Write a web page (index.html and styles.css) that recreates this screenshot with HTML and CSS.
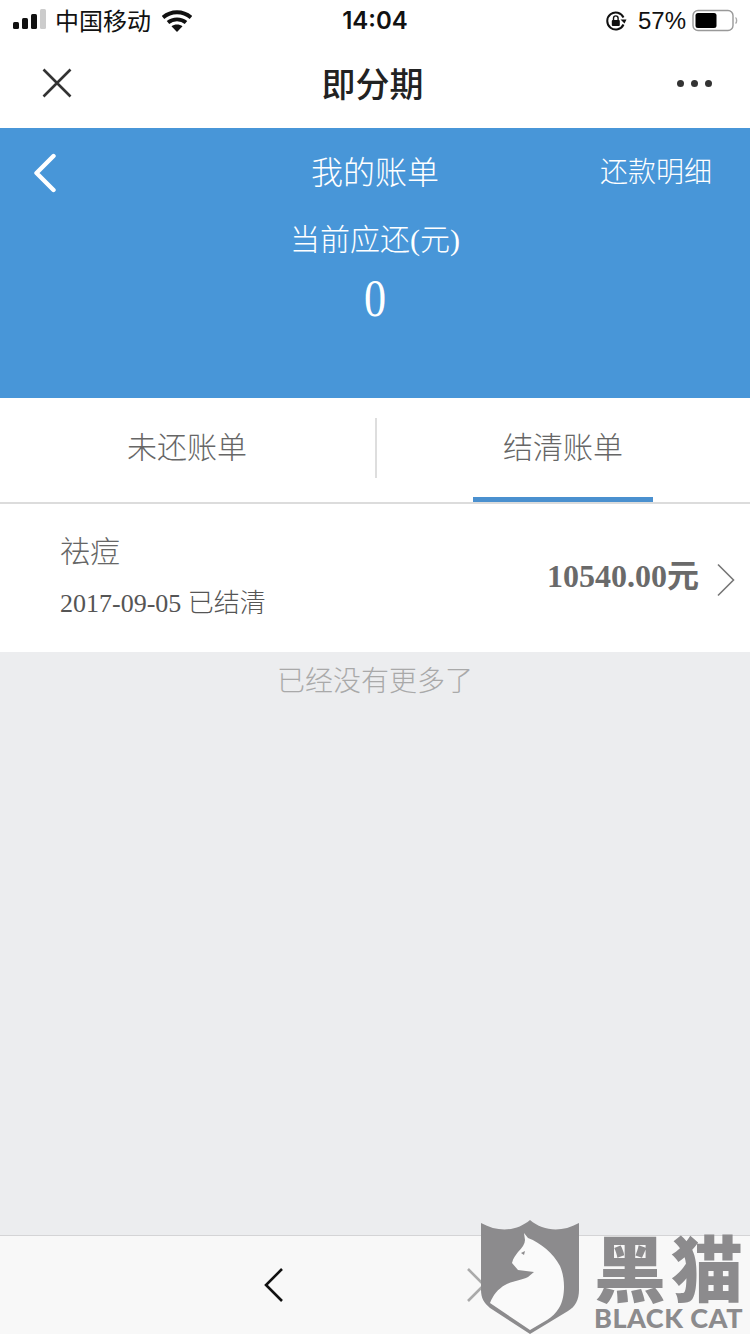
FILE: index.html
```html
<!DOCTYPE html>
<html>
<head>
  <title>即分期</title>
  <link rel="stylesheet" href="styles.css">
</head>
<body>
  <div class="phone">
    <div class="status-bar">
      <div class="status-left">
        <svg class="signal" width="34" height="20" viewBox="0 0 34 20">
          <rect x="0" y="13" width="6" height="7" rx="1.5" fill="#111"/>
          <rect x="9" y="9" width="6" height="11" rx="1.5" fill="#111"/>
          <rect x="18" y="5" width="6" height="15" rx="1.5" fill="#111"/>
          <rect x="27" y="0" width="6" height="20" rx="1.5" fill="#ccc"/>
        </svg>
        <span class="carrier">中国移动</span>
        <svg class="wifi" width="30" height="22" viewBox="0 0 30 22">
          <path d="M1 7.5C9 0.5 21 0.5 29 7.5" fill="none" stroke="#111" stroke-width="3.8"/>
          <path d="M6 12.5C11 8.2 19 8.2 24 12.5" fill="none" stroke="#111" stroke-width="3.8"/>
          <path d="M15 22L9.5 16.3C12.5 13.8 17.5 13.8 20.5 16.3Z" fill="#111"/>
        </svg>
      </div>
      <div class="status-time">14:04</div>
      <div class="status-right">
        <svg class="lock" width="22" height="22" viewBox="0 0 22 22">
          <path d="M18.5 14.5A8.5 8.5 0 1 1 18.5 7.5" fill="none" stroke="#111" stroke-width="2"/>
          <path d="M15.5 9.5L21.5 9.5L19.5 13.5Z" fill="#111"/>
          <rect x="6.8" y="10" width="8" height="6" rx="1" fill="#111"/>
          <path d="M8.5 10V8.2a2.3 2.3 0 0 1 4.6 0V10" fill="none" stroke="#111" stroke-width="1.4"/>
        </svg>
        <span class="battery-text">57%</span>
        <svg class="battery" width="46" height="24" viewBox="0 0 46 24">
          <rect x="1" y="1.5" width="40" height="20" rx="5" fill="#fff" stroke="#999" stroke-width="1.4"/>
          <rect x="3.5" y="4" width="21" height="15" rx="2.5" fill="#000"/>
          <path d="M43.5 8.5C45 9.5 45 13.5 43.5 14.5" fill="none" stroke="#aaa" stroke-width="1.4"/>
        </svg>
      </div>
    </div>

    <div class="nav-bar">
      <svg class="nav-close" width="30" height="30" viewBox="0 0 30 30">
        <path d="M1.5 1.5L28.5 28.5M28.5 1.5L1.5 28.5" stroke="#333" stroke-width="2.6" fill="none"/>
      </svg>
      <div class="nav-title">即分期</div>
      <div class="nav-more">
        <span class="dot"></span><span class="dot"></span><span class="dot"></span>
      </div>
    </div>

    <div class="bill-header">
      <div class="bill-top">
        <svg class="bill-back" width="26" height="40" viewBox="0 0 26 40">
          <path d="M21.5 3L4.5 20L21.5 37" stroke="#fff" stroke-width="4.4" stroke-linecap="round" stroke-linejoin="round" fill="none"/>
        </svg>
        <div class="bill-title">我的账单</div>
        <div class="bill-detail">还款明细</div>
      </div>
      <div class="bill-label">当前应还(元)</div>
      <div class="bill-amount">0</div>
    </div>

    <div class="tabs">
      <div class="tab">未还账单</div>
      <div class="tab-sep"></div>
      <div class="tab tab-active">结清账单</div>
    </div>

    <div class="bill-row">
      <div class="bill-info">
        <div class="bill-name">祛痘</div>
        <div class="bill-date">2017-09-05 已结清</div>
      </div>
      <div class="bill-money">10540.00元</div>
      <svg class="bill-arrow" width="20" height="34" viewBox="0 0 20 34">
        <path d="M2 1.5L17.5 17L2 32.5" stroke="#777" stroke-width="1.6" fill="none"/>
      </svg>
    </div>

    <div class="list-end">已经没有更多了</div>

    <div class="bottom-bar">
      <svg class="bottom-back" width="20" height="34" viewBox="0 0 20 34">
        <path d="M18 1L2 17L18 33" stroke="#111" stroke-width="2.6" fill="none"/>
      </svg>
      <svg class="bottom-next" width="20" height="34" viewBox="0 0 20 34">
        <path d="M2 1L18 17L2 33" stroke="#aaa" stroke-width="2.6" fill="none"/>
      </svg>
    </div>

    <div class="watermark">
      <svg class="wm-shield" width="98" height="114" viewBox="0 0 98 114">
        <path d="M0 3C18 13 36 11 49 0C62 11 80 13 98 3V70C98 80 94 87 87 91L49 114L9 88C3 83 0 78 0 70Z" fill="#8c8b8d"/>
        <path d="M43 13L47 18C60 23 72 33 79 46C85 60 84 78 78 88C75 93 71 97 66 100L49 110L9 83C12 75 17 69 24 65C31 61 41 60 47 57L53 52L37 50L31 43C32 38 35 35 37 32C41 28 44 24 44 20Z" fill="#fafafa"/>
        <path d="M40 33L44 31L43 35Z" fill="#8c8b8d"/>
      </svg>
      <div class="wm-text">
        <div class="wm-cn">黑猫</div>
        <div class="wm-en">BLACK CAT</div>
      </div>
    </div>
  </div>
</body>
</html>
```

FILE: styles.css
```css
* {
  box-sizing: border-box;
}

body {
  margin: 0;
  background: #ecedef;
  font-family: "Liberation Sans", "Noto Sans CJK SC", sans-serif;
}

.phone {
  position: relative;
  width: 750px;
  height: 1334px;
  overflow: hidden;
  display: flex;
  flex-direction: column;
  background: #ecedef;
}

.status-bar {
  height: 44px;
  flex-shrink: 0;
  background: #fff;
  display: grid;
  grid-template-columns: 1fr auto 1fr;
  align-items: center;
  padding-bottom: 6px;
  color: #111;
  font-size: 24px;
}

.status-left {
  display: flex;
  align-items: center;
  padding-left: 13px;
}

.carrier {
  margin-left: 8px;
  font-size: 24px;
}

.wifi {
  margin-left: 11px;
  margin-top: 3px;
}

.status-time {
  font-family: Inter, "Liberation Sans", sans-serif;
  font-weight: 600;
  font-size: 24px;
  margin-top: 2px;
}

.status-right {
  display: flex;
  align-items: center;
  justify-content: flex-end;
  padding-right: 12px;
  margin-top: 3px;
}

.battery-text {
  margin-left: 12px;
  margin-right: 6px;
}

.lock {
  margin-right: -1px;
}

.nav-bar {
  height: 84px;
  flex-shrink: 0;
  background: #fff;
  display: flex;
  align-items: center;
  justify-content: space-between;
  padding: 0 38px 6px 42px;
}

.nav-title {
  font-size: 34px;
  font-weight: 500;
  color: #222;
  margin-left: -4px;
  margin-top: -2px;
}

.nav-more {
  display: flex;
  gap: 7px;
}

.dot {
  width: 7px;
  height: 7px;
  border-radius: 50%;
  background: #333;
}

.bill-header {
  height: 270px;
  flex-shrink: 0;
  background: #4896d8;
  color: #fff;
  text-align: center;
  font-family: "Liberation Serif", "Noto Sans CJK SC", serif;
}

.bill-top {
  position: relative;
  display: flex;
  justify-content: center;
  padding-top: 24px;
}

.bill-back {
  position: absolute;
  left: 32px;
  top: 25px;
}

.bill-title {
  font-size: 32px;
  line-height: 42px;
  font-weight: 300;
}

.bill-detail {
  position: absolute;
  right: 38px;
  top: 24px;
  font-size: 28px;
  line-height: 42px;
  font-weight: 300;
}

.bill-label {
  margin-top: 25px;
  font-size: 30px;
  line-height: 42px;
  font-weight: 300;
}

.bill-amount {
  margin-top: 10px;
  font-size: 52px;
  line-height: 56px;
  transform: scaleX(0.85);
}

.tabs {
  height: 106px;
  flex-shrink: 0;
  background: #fff;
  border-bottom: 2px solid #dcdcdc;
  display: flex;
  align-items: flex-start;
}

.tab {
  position: relative;
  flex: 1;
  height: 104px;
  display: flex;
  justify-content: center;
  padding-top: 29px;
  font-size: 30px;
  line-height: 42px;
  font-weight: 300;
  color: #666;
}

.tab-active::after {
  content: "";
  position: absolute;
  left: 97px;
  bottom: 0;
  width: 180px;
  height: 5px;
  background: #4a90cf;
}

.tab-sep {
  width: 2px;
  height: 60px;
  margin: 20px -1px 0 1px;
  background: #dedede;
}

.bill-row {
  height: 148px;
  flex-shrink: 0;
  background: #fff;
  display: flex;
  align-items: center;
  padding: 0 14px 0 60px;
  font-family: "Liberation Serif", "Noto Sans CJK SC", serif;
  color: #666;
}

.bill-info {
  flex: 1;
}

.bill-name {
  font-size: 30px;
  line-height: 40px;
  font-weight: 300;
  margin-top: -3px;
}

.bill-date {
  margin-top: 14px;
  font-size: 26px;
  line-height: 36px;
  color: #555;
  font-weight: 300;
}

.bill-money {
  font-size: 32px;
  font-weight: bold;
  color: #6a6a6a;
  margin-right: 17px;
  margin-bottom: 10px;
}

.bill-arrow {
  margin-top: 4px;
}

.list-end {
  padding-top: 10px;
  text-align: center;
  font-size: 28px;
  line-height: 40px;
  font-weight: 300;
  color: #a9a9a9;
}

.bottom-bar {
  position: absolute;
  left: 0;
  right: 0;
  bottom: 0;
  height: 99px;
  background: #f8f8f8;
  border-top: 1px solid #d4d4d6;
}

.bottom-back {
  position: absolute;
  left: 264px;
  top: 32px;
}

.bottom-next {
  position: absolute;
  left: 466px;
  top: 32px;
}

.watermark {
  position: absolute;
  left: 481px;
  top: 1220px;
  display: flex;
  color: #8c8b8d;
}

.wm-text {
  margin-left: 15px;
  font-family: "Noto Sans CJK SC", sans-serif;
}

.wm-cn {
  font-size: 72px;
  line-height: 66px;
  font-weight: 900;
  margin-top: 12px;
  letter-spacing: 5px;
  white-space: nowrap;
}

.wm-en {
  margin-top: 8px;
  font-family: Lato, sans-serif;
  font-size: 27px;
  line-height: 24px;
  font-weight: 900;
  letter-spacing: 0.5px;
  white-space: nowrap;
}
```
